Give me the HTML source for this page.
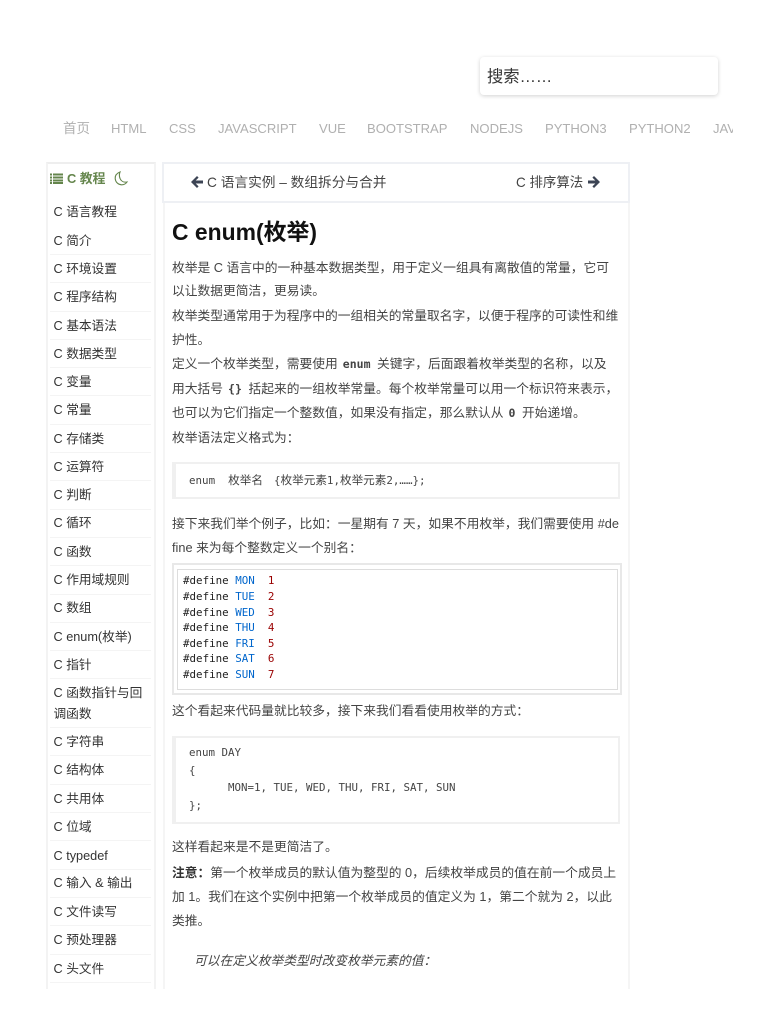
<!DOCTYPE html>
<html lang="zh"><head><meta charset="utf-8"><title>C enum(枚举)</title>
<style>
html,body{margin:0;padding:0;background:#fff;width:768px;height:1024px;overflow:hidden}
body{font-family:"Liberation Sans","Noto Sans CJK SC",sans-serif;font-size:12.75px;color:#444}
#p{position:absolute;left:0;top:0;width:768px;height:1024px;overflow:hidden;filter:blur(.35px)}
#c{position:absolute;left:0;top:0;width:768px;height:989px;overflow:hidden}
.t{position:absolute;white-space:pre;line-height:20px;height:20px}
.s{color:#333;left:53.5px;font-size:12.7px}
.n{color:#b0b0b0;font-size:13.05px}
.d{position:absolute;left:50px;width:101px;height:1px;background:#f4f4f4}
.b{position:absolute;box-sizing:border-box;background:#fff}
.m{font-family:"DejaVu Sans Mono","Noto Sans CJK SC",monospace;font-size:10.85px;line-height:16px;height:16px}
.m i{font-style:normal;font-size:11.6px}
.k{color:#06c}.v{color:#900}.h{color:#222}
code{font-family:"DejaVu Sans Mono",monospace;font-size:11.5px;font-weight:bold;color:#444;margin:0 3px 0 1.5px}
svg{position:absolute;overflow:visible}
</style></head><body><div id="p"><div id="c">

<div class="b" style="left:480px;top:57px;width:238px;height:38px;border-radius:4px;box-shadow:0 1px 4px rgba(0,0,0,.18)"></div>
<div class="t" style="left:487px;top:66px;font-size:16.3px;color:#333;line-height:20px;padding-top:1px">搜索……</div>

<div style="position:absolute;left:0;top:110px;width:733px;height:36px;overflow:hidden">
<div class="t n" style="left:63px;top:9px;font-size:13.5px">首页</div>
<div class="t n" style="left:111px;top:9px">HTML</div>
<div class="t n" style="left:169px;top:9px">CSS</div>
<div class="t n" style="left:218px;top:9px">JAVASCRIPT</div>
<div class="t n" style="left:319px;top:9px">VUE</div>
<div class="t n" style="left:367px;top:9px">BOOTSTRAP</div>
<div class="t n" style="left:470px;top:9px">NODEJS</div>
<div class="t n" style="left:545px;top:9px">PYTHON3</div>
<div class="t n" style="left:629px;top:9px">PYTHON2</div>
<div class="t n" style="left:713px;top:9px">JAVA</div>
</div>

<div class="b" style="left:46px;top:162px;width:110px;height:840px;border:2px solid #f3f3f3;border-top-color:#eeeeee"></div>
<svg style="left:50px;top:173px" width="13" height="11" viewBox="0 0 13 11"><path fill="#64854c" d="M0 .5h2v2H0zM3 .5h10v2H3zM0 3.500h2v2H0zM3 3.500h10v2H3zM0 6.500h2v2H0zM3 6.500h10v2H3zM0 9h2v2H0zM3 9h10v2H3z"/></svg>
<div class="t" style="left:67px;top:169px;font-weight:bold;color:#64854c;font-size:12.8px">C 教程</div>
<svg style="left:114px;top:171px" width="14" height="15" viewBox="0 0 14 15"><path fill="none" stroke="#64854c" stroke-width="1.1" d="M6 1C2.800 2.200 1 4.600 1.200 7.600 1.500 11 4 13.600 7.400 13.800 9.800 13.900 11.800 12.800 13 11 9.600 11.600 7 10 6 7.400 5.200 5.400 5.200 3 6 1Z"/></svg>

<div class="t s" style="top:202px">C 语言教程</div>
<div class="t s" style="top:231px">C 简介</div><div class="d" style="top:254px"></div>
<div class="t s" style="top:259px">C 环境设置</div><div class="d" style="top:282px"></div>
<div class="t s" style="top:287px">C 程序结构</div><div class="d" style="top:311px"></div>
<div class="t s" style="top:316px">C 基本语法</div><div class="d" style="top:339px"></div>
<div class="t s" style="top:344px">C 数据类型</div><div class="d" style="top:367px"></div>
<div class="t s" style="top:372px">C 变量</div><div class="d" style="top:395px"></div>
<div class="t s" style="top:400px">C 常量</div><div class="d" style="top:424px"></div>
<div class="t s" style="top:429px">C 存储类</div><div class="d" style="top:452px"></div>
<div class="t s" style="top:457px">C 运算符</div><div class="d" style="top:480px"></div>
<div class="t s" style="top:485px">C 判断</div><div class="d" style="top:509px"></div>
<div class="t s" style="top:513px">C 循环</div><div class="d" style="top:537px"></div>
<div class="t s" style="top:542px">C 函数</div><div class="d" style="top:565px"></div>
<div class="t s" style="top:570px">C 作用域规则</div><div class="d" style="top:594px"></div>
<div class="t s" style="top:598px">C 数组</div><div class="d" style="top:622px"></div>
<div class="t s" style="top:627px">C enum(枚举)</div><div class="d" style="top:650px"></div>
<div class="t s" style="top:655px">C 指针</div><div class="d" style="top:678px"></div>
<div class="t s" style="top:683px">C 函数指针与回</div>
<div class="t s" style="top:704px">调函数</div><div class="d" style="top:727px"></div>
<div class="t s" style="top:732px">C 字符串</div><div class="d" style="top:755px"></div>
<div class="t s" style="top:760px">C 结构体</div><div class="d" style="top:784px"></div>
<div class="t s" style="top:789px">C 共用体</div><div class="d" style="top:812px"></div>
<div class="t s" style="top:817px">C 位域</div><div class="d" style="top:840px"></div>
<div class="t s" style="top:846px">C typedef</div><div class="d" style="top:869px"></div>
<div class="t s" style="top:873px">C 输入 &amp; 输出</div><div class="d" style="top:897px"></div>
<div class="t s" style="top:902px">C 文件读写</div><div class="d" style="top:925px"></div>
<div class="t s" style="top:930px">C 预处理器</div><div class="d" style="top:954px"></div>
<div class="t s" style="top:959px">C 头文件</div><div class="d" style="top:982px"></div>

<div class="b" style="left:163px;top:200px;width:467px;height:800px;border:2px solid #f5f5f5;border-top:0"></div>
<div class="b" style="left:162px;top:162px;width:468px;height:41px;border:2px solid #eef0f4"></div>
<svg style="left:191px;top:176px" width="12" height="12" viewBox="0 0 12 12"><path fill="#3c4454" d="M6 0 7.600 1.600 4.700 4.500H12V7.500H4.700L7.600 10.400 6 12 0 6Z"/></svg>
<div class="t" style="left:207px;top:173px;color:#444;font-size:13.7px">C 语言实例 – 数组拆分与合并</div>
<div class="t" style="left:516px;top:173px;color:#444;font-size:13.45px">C 排序算法</div>
<svg style="left:588px;top:176px" width="12" height="12" viewBox="0 0 12 12"><path fill="#3c4454" d="M6 0 4.400 1.600 7.300 4.500H0V7.500H7.300L4.400 10.400 6 12 12 6Z"/></svg>

<div class="t" style="left:172px;top:218px;height:28px;line-height:28px;font-size:22.9px;font-weight:bold;color:#111">C enum(枚举)</div>

<div class="t" style="left:172px;top:258px">枚举是 C 语言中的一种基本数据类型，用于定义一组具有离散值的常量，它可</div>
<div class="t" style="left:172px;top:281px">以让数据更简洁，更易读。</div>
<div class="t" style="left:172px;top:306px">枚举类型通常用于为程序中的一组相关的常量取名字，以便于程序的可读性和维</div>
<div class="t" style="left:172px;top:330px">护性。</div>
<div class="t" style="left:172px;top:354px">定义一个枚举类型，需要使用 <code>enum</code> 关键字，后面跟着枚举类型的名称，以及</div>
<div class="t" style="left:172px;top:379px">用大括号 <code>{}</code> 括起来的一组枚举常量。每个枚举常量可以用一个标识符来表示，</div>
<div class="t" style="left:172px;top:403px">也可以为它们指定一个整数值，如果没有指定，那么默认从 <code>0</code> 开始递增。</div>
<div class="t" style="left:172px;top:428px">枚举语法定义格式为：</div>

<div class="b" style="left:172px;top:462px;width:448px;height:37px;border:2px solid #f0f0f0;border-left-width:4px"></div>
<div class="t m" style="left:189px;top:472px;color:#444">enum  <i>枚举名</i> <span style="margin-left:4.500px">{</span><i>枚举元素</i>1,<i>枚举元素</i>2,……};</div>

<div class="t" style="left:172px;top:514px">接下来我们举个例子，比如：一星期有 7 天，如果不用枚举，我们需要使用 #de</div>
<div class="t" style="left:172px;top:538px">fine 来为每个整数定义一个别名：</div>

<div class="b" style="left:172px;top:563px;width:450px;height:132px;border:2px solid #e8e8e8"></div>
<div class="b" style="left:177px;top:569px;width:441px;height:121px;border:1px solid #ddd"></div>
<div class="t m h" style="left:183px;top:573px">#define <span class="k">MON</span>  <span class="v">1</span></div>
<div class="t m h" style="left:183px;top:589px">#define <span class="k">TUE</span>  <span class="v">2</span></div>
<div class="t m h" style="left:183px;top:605px">#define <span class="k">WED</span>  <span class="v">3</span></div>
<div class="t m h" style="left:183px;top:620px">#define <span class="k">THU</span>  <span class="v">4</span></div>
<div class="t m h" style="left:183px;top:636px">#define <span class="k">FRI</span>  <span class="v">5</span></div>
<div class="t m h" style="left:183px;top:651px">#define <span class="k">SAT</span>  <span class="v">6</span></div>
<div class="t m h" style="left:183px;top:667px">#define <span class="k">SUN</span>  <span class="v">7</span></div>

<div class="t" style="left:172px;top:701px">这个看起来代码量就比较多，接下来我们看看使用枚举的方式：</div>

<div class="b" style="left:172px;top:736px;width:448px;height:88px;border:2px solid #f0f0f0;border-left-width:4px"></div>
<div class="t m" style="left:189px;top:745px;color:#444;font-size:10.8px">enum DAY</div>
<div class="t m" style="left:189px;top:763px;color:#444;font-size:10.8px">{</div>
<div class="t m" style="left:189px;top:780px;color:#444;font-size:10.8px">      MON=1, TUE, WED, THU, FRI, SAT, SUN</div>
<div class="t m" style="left:189px;top:798px;color:#444;font-size:10.8px">};</div>

<div class="t" style="left:172px;top:837px">这样看起来是不是更简洁了。</div>
<div class="t" style="left:172px;top:863px"><b style="color:#333">注意：</b>第一个枚举成员的默认值为整型的 0，后续枚举成员的值在前一个成员上</div>
<div class="t" style="left:172px;top:887px">加 1。我们在这个实例中把第一个枚举成员的值定义为 1，第二个就为 2，以此</div>
<div class="t" style="left:172px;top:911px">类推。</div>
<div class="t" style="left:194px;top:951px;font-style:italic">可以在定义枚举类型时改变枚举元素的值：</div>

</div></div></body></html>
